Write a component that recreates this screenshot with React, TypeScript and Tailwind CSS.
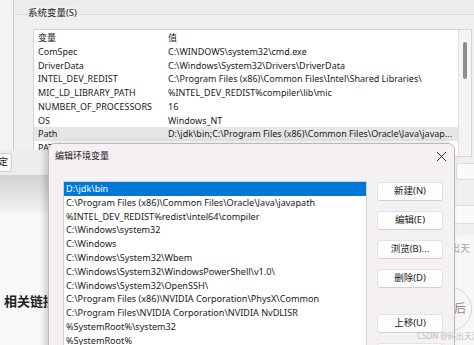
const sysVars: [string, string][] = [
  ["ComSpec", "C:\\WINDOWS\\system32\\cmd.exe"],
  ["DriverData", "C:\\Windows\\System32\\Drivers\\DriverData"],
  ["INTEL_DEV_REDIST", "C:\\Program Files (x86)\\Common Files\\Intel\\Shared Libraries\\"],
  ["MIC_LD_LIBRARY_PATH", "%INTEL_DEV_REDIST%compiler\\lib\\mic"],
  ["NUMBER_OF_PROCESSORS", "16"],
  ["OS", "Windows_NT"],
  ["Path", "D:\\jdk\\bin;C:\\Program Files (x86)\\Common Files\\Oracle\\Java\\javap..."],
  ["PATHEXT", ""],
];

const paths = [
  "D:\\jdk\\bin",
  "C:\\Program Files (x86)\\Common Files\\Oracle\\Java\\javapath",
  "%INTEL_DEV_REDIST%redist\\intel64\\compiler",
  "C:\\Windows\\system32",
  "C:\\Windows",
  "C:\\Windows\\System32\\Wbem",
  "C:\\Windows\\System32\\WindowsPowerShell\\v1.0\\",
  "C:\\Windows\\System32\\OpenSSH\\",
  "C:\\Program Files (x86)\\NVIDIA Corporation\\PhysX\\Common",
  "C:\\Program Files\\NVIDIA Corporation\\NVIDIA NvDLISR",
  "%SystemRoot%\\system32",
  "%SystemRoot%",
  "%SYSTEMROOT%\\System32\\Wbem",
];

function WinButton({ label, className = "" }: { label: string; className?: string }) {
  return (
    <div
      className={`h-[19px] rounded-[3px] border border-[#e3e3e3] border-b-[#d0d0d0] bg-[#fdfdfd] flex items-center justify-center text-[9.5px] text-[#1b1b1b] ${className}`}
    >
      {label}
    </div>
  );
}

export default function App() {
  return (
    <div className="relative w-[474px] h-[345px] overflow-hidden bg-[#f7f7f7] text-[#1a1a1a] [font-family:'Noto_Sans','Noto_Sans_CJK_SC',sans-serif]">
      {/* page behind, top-left strip */}
      <div className="absolute left-0 top-0 w-[14px] h-[150px] bg-[#f3f3f3]" />

      {/* environment variables window (behind) */}
      <div className="absolute left-[13px] top-0 w-[461px] h-[235px] bg-[#f0f0f0] border-l border-[#cdcdcd] flex flex-col">
        <div className="h-[15px] bg-[#ececec] border-b border-[#dadada] shrink-0" />
        <div className="relative h-[14px] shrink-0">
          <span className="absolute left-[14px] -top-[9px] bg-[#f0f0f0] pr-[2px] text-[9.5px] leading-[14px] text-[#222]">
            系统变量(S)
          </span>
        </div>
        <div className="ml-[19px] mr-[2px] h-[128px] shrink-0 border border-[#d4d4d4] bg-white flex overflow-hidden">
          <div className="flex-1 flex flex-col text-[9px] overflow-hidden">
            <div className="h-[15px] flex items-center shrink-0">
              <span className="w-[134px] pl-[4px]">变量</span>
              <span>值</span>
            </div>
            {sysVars.map(([k, v]) => (
              <div
                key={k}
                className={`h-[13.7px] flex items-center shrink-0 whitespace-nowrap ${k === "Path" ? "bg-[#e6e6e6]" : ""}`}
              >
                <span className="w-[134px] pl-[4px]">{k}</span>
                <span className="flex-1 overflow-hidden">{v}</span>
              </div>
            ))}
          </div>
          <div className="w-[13px] shrink-0 bg-[#f4f4f4] border-l border-[#e2e2e2] flex justify-center pt-[12px]">
            <div className="w-[4px] h-[37px] rounded-full bg-[#8c8c8c]" />
          </div>
        </div>
        <div className="flex-1 flex flex-col items-end pt-[6px] gap-[25px] pr-0">
          <div className="w-[18px] h-[17px] bg-[#fafafa] border border-r-0 border-[#dcdcdc] rounded-l-[3px]" />
          <div className="w-[30px] h-[19px] bg-[#fafafa] border border-r-0 border-[#dcdcdc] rounded-l-[3px]" />
        </div>
      </div>

      {/* CSDN page pieces */}
      <div className="absolute left-0 top-[150px] w-[48px] h-[195px] flex flex-col">
        <div className="h-[25px] bg-[#ededed] relative overflow-hidden shrink-0">
          <div className="absolute -left-[20px] top-[3px] w-[32px] h-[19px] border border-[#cfcfcf] bg-[#f8f8f8] rounded-[3px] flex items-center justify-end pr-[3px] text-[9.5px]">
            定
          </div>
        </div>
        <div className="h-[37px] shrink-0 bg-gradient-to-b from-[#d2d2d2] to-[#f2f2f2]" />
        <div className="flex-1 bg-[#f8f8f8] relative">
          <div className="absolute left-[4px] top-[80px] text-[13px] font-bold text-[#222] whitespace-nowrap">
            相关链接
          </div>
          <div className="absolute left-0 top-[163px] text-[10px] text-[#555] whitespace-nowrap">
            :28<span className="ml-[20px]">共</span>
          </div>
        </div>
      </div>

      <div className="absolute left-[440px] top-[241px] text-[10px] text-[#a8a8a8] whitespace-nowrap">
        讲出天
      </div>
      <div className="absolute left-[428px] top-[287px] w-[44px] h-[44px] rounded-full border border-[#d6d6d6] flex items-center justify-end pr-[5px] text-[12px] text-[#8a8a8a]">
        后
      </div>

      {/* edit environment variable dialog */}
      <div className="absolute left-[48px] top-[143px] w-[407px] h-[220px] rounded-t-[7px] border border-[#b9b9b9] bg-[#f4f0f3] shadow-[-3px_0_6px_rgba(0,0,0,0.18)] flex flex-col">
        <div className="h-[24px] shrink-0 flex items-center justify-between pl-[6px] pr-[7px] rounded-t-[7px] bg-gradient-to-b from-[#f6eff5] to-[#f4f0f3]">
          <span className="text-[9px] text-[#222]">编辑环境变量</span>
          <svg width="11" height="11" viewBox="0 0 11 11" className="text-[#333]">
            <path d="M1 1L10 10M10 1L1 10" stroke="currentColor" strokeWidth="1" fill="none" />
          </svg>
        </div>
        <div className="flex pl-[14px] pt-[13px] gap-[10px]">
          <div className="w-[304px] h-[200px] border border-[#d2d2d2] bg-white flex flex-col text-[9.1px] overflow-hidden">
            {paths.map((p, i) => (
              <div
                key={p}
                className={`h-[13.8px] shrink-0 flex items-center pl-[2px] whitespace-nowrap ${i === 0 ? "bg-[#0078d7] text-white" : ""}`}
              >
                {p}
              </div>
            ))}
          </div>
          <div className="w-[66px] mt-[1px] flex flex-col gap-[10px]">
            <WinButton label="新建(N)" />
            <WinButton label="编辑(E)" />
            <WinButton label="浏览(B)..." />
            <WinButton label="删除(D)" />
            <WinButton label="上移(U)" className="mt-[16px]" />
            <WinButton label="下移(O)" />
          </div>
        </div>
      </div>

      <div className="absolute left-[417px] top-[330px] text-[8px] text-[#bdbdbd] whitespace-nowrap">
        CSDN @码出天涯
      </div>
    </div>
  );
}
